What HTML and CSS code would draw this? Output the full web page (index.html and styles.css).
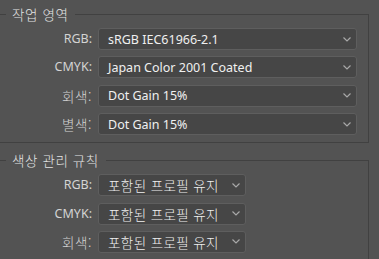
FILE: index.html
```html
<!DOCTYPE html>
<html lang="ko">
<head>
<meta charset="utf-8">
<link rel="stylesheet" href="styles.css">
</head>
<body>
<fieldset class="group">
  <legend class="title">작업 영역</legend>
  <div class="rows">
    <span class="label">RGB:</span>
    <div class="select wide"><span class="value">sRGB IEC61966-2.1</span><svg class="chev" width="8" height="5" viewBox="0 0 8 5"><polyline points="0.5,0.5 4,4 7.5,0.5" fill="none" stroke="#a8a8a8" stroke-width="1.2"/></svg></div>
    <span class="label">CMYK:</span>
    <div class="select wide"><span class="value">Japan Color 2001 Coated</span><svg class="chev" width="8" height="5" viewBox="0 0 8 5"><polyline points="0.5,0.5 4,4 7.5,0.5" fill="none" stroke="#a8a8a8" stroke-width="1.2"/></svg></div>
    <span class="label ko-label">회색:</span>
    <div class="select wide"><span class="value">Dot Gain 15%</span><svg class="chev" width="8" height="5" viewBox="0 0 8 5"><polyline points="0.5,0.5 4,4 7.5,0.5" fill="none" stroke="#a8a8a8" stroke-width="1.2"/></svg></div>
    <span class="label ko-label">별색:</span>
    <div class="select wide"><span class="value">Dot Gain 15%</span><svg class="chev" width="8" height="5" viewBox="0 0 8 5"><polyline points="0.5,0.5 4,4 7.5,0.5" fill="none" stroke="#a8a8a8" stroke-width="1.2"/></svg></div>
  </div>
</fieldset>
<fieldset class="group second">
  <legend class="title">색상 관리 규칙</legend>
  <div class="rows">
    <span class="label">RGB:</span>
    <div class="select narrow"><span class="value ko">포함된 프로필 유지</span><svg class="chev" width="8" height="5" viewBox="0 0 8 5"><polyline points="0.5,0.5 4,4 7.5,0.5" fill="none" stroke="#a8a8a8" stroke-width="1.2"/></svg></div>
    <span class="label">CMYK:</span>
    <div class="select narrow"><span class="value ko">포함된 프로필 유지</span><svg class="chev" width="8" height="5" viewBox="0 0 8 5"><polyline points="0.5,0.5 4,4 7.5,0.5" fill="none" stroke="#a8a8a8" stroke-width="1.2"/></svg></div>
    <span class="label ko-label">회색:</span>
    <div class="select narrow"><span class="value ko">포함된 프로필 유지</span><svg class="chev" width="8" height="5" viewBox="0 0 8 5"><polyline points="0.5,0.5 4,4 7.5,0.5" fill="none" stroke="#a8a8a8" stroke-width="1.2"/></svg></div>
  </div>
</fieldset>
</body>
</html>
```

FILE: styles.css
```css
html, body {
  margin: 0;
  padding: 0;
  background: #535353;
  overflow: hidden;
}
body {
  width: 379px;
  height: 259px;
  font-family: "Noto Sans", "Noto Sans CJK KR", sans-serif;
  font-size: 12px;
  color: #d6d6d6;
}
.group {
  box-sizing: border-box;
  width: 379px;
  margin: 0 0 0 -10px;
  padding: 0 11px 7px 0;
  border: 1px solid #414141;
  min-width: 0;
}
.second {
  margin-top: 3px;
}
.title {
  margin-left: 15px;
  padding: 0 7px 0 6px;
  height: 28px;
  line-height: 28px;
  font-family: "Noto Sans CJK KR", sans-serif;
  font-size: 13.5px;
  font-weight: 300;
  color: #e4e4e4;
  letter-spacing: 0.6px;
}
.rows {
  display: grid;
  grid-template-columns: 101px 1fr;
  column-gap: 6px;
  row-gap: 6.4px;
  align-items: center;
}
.label {
  text-align: right;
  line-height: 22px;
  color: #d4d4d4;
  font-size: 12.5px;
}
.ko-label {
  font-family: "Noto Sans CJK KR", sans-serif;
  font-size: 13.5px;
  font-weight: 300;
  letter-spacing: 0.6px;
}
.select {
  box-sizing: border-box;
  height: 22px;
  display: flex;
  align-items: center;
  justify-content: space-between;
  padding: 0 5px 0 9px;
  background: #464646;
  border: 1px solid #5e5e5e;
  border-radius: 3px;
}
.narrow {
  width: 148px;
}
.value {
  color: #f0f0f0;
  font-size: 12.5px;
  white-space: nowrap;
}
.ko {
  font-family: "Noto Sans CJK KR", sans-serif;
  font-size: 13.5px;
  font-weight: 300;
  letter-spacing: 0.4px;
}
.chev {
  display: block;
  flex: none;
}
```
